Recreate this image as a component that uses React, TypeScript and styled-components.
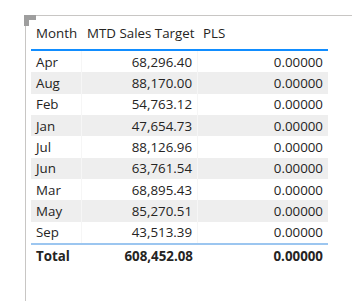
import React from "react";
import styled, { createGlobalStyle } from "styled-components";

const GlobalStyle = createGlobalStyle`
  html, body { margin: 0; padding: 0; background: #ffffff; }
  body { font-family: "Segoe UI", "Open Sans", "Noto Sans", sans-serif; color: #252423; }
  * { box-sizing: border-box; }
`;

const Canvas = styled.div`
  width: 352px;
  height: 301px;
  padding: 15px 0 0 25px;
  overflow: hidden;
`;

const Frame = styled.div`
  position: relative;
  height: 100%;
  border-top: 1px solid #c8c6c4;
  border-left: 1px solid #c8c6c4;
  padding-left: 5px;
`;

const Corner = styled.div`
  position: absolute;
  left: -2px;
  top: -1px;
  width: 12px;
  height: 11px;
  border-top: 5px solid #9e9e9e;
  border-left: 5px solid #9e9e9e;
`;

const Table = styled.div`
  display: grid;
  grid-template-columns: 51px 116px 130px;
  width: 297px;
  font-size: 13.33px;
`;

const HeadCell = styled.div`
  height: 35px;
  padding: 0 5px;
  display: flex;
  align-items: center;
  white-space: nowrap;
  border-bottom: 2px solid #118dff;
`;

const Cell = styled.div<{ $alt: boolean; $num?: boolean; $last?: boolean }>`
  height: 21.33px;
  padding: 0 5px;
  display: flex;
  align-items: center;
  justify-content: ${(p) => (p.$num ? "flex-end" : "flex-start")};
  background: ${(p) => (p.$alt ? "#eeeeee" : "#ffffff")};
  border-right: ${(p) => (p.$last ? "none" : "1px solid #f6f6f6")};
  white-space: nowrap;
`;

const TotalCell = styled.div<{ $num?: boolean }>`
  height: 25px;
  padding: 0 5px;
  display: flex;
  align-items: center;
  justify-content: ${(p) => (p.$num ? "flex-end" : "flex-start")};
  border-top: 2px solid #9cc6f0;
  font-weight: 700;
  white-space: nowrap;
`;

const rows: [string, string, string][] = [
  ["Apr", "68,296.40", "0.00000"],
  ["Aug", "88,170.00", "0.00000"],
  ["Feb", "54,763.12", "0.00000"],
  ["Jan", "47,654.73", "0.00000"],
  ["Jul", "88,126.96", "0.00000"],
  ["Jun", "63,761.54", "0.00000"],
  ["Mar", "68,895.43", "0.00000"],
  ["May", "85,270.51", "0.00000"],
  ["Sep", "43,513.39", "0.00000"],
];

export default function App() {
  return (
    <>
      <GlobalStyle />
      <Canvas>
        <Frame>
          <Corner />
          <Table>
            <HeadCell>Month</HeadCell>
            <HeadCell>MTD Sales Target</HeadCell>
            <HeadCell>PLS</HeadCell>
            {rows.map((r, i) => (
              <React.Fragment key={r[0]}>
                <Cell $alt={i % 2 === 1}>{r[0]}</Cell>
                <Cell $alt={i % 2 === 1} $num>{r[1]}</Cell>
                <Cell $alt={i % 2 === 1} $num $last>{r[2]}</Cell>
              </React.Fragment>
            ))}
            <TotalCell>Total</TotalCell>
            <TotalCell $num>608,452.08</TotalCell>
            <TotalCell $num>0.00000</TotalCell>
          </Table>
        </Frame>
      </Canvas>
    </>
  );
}
